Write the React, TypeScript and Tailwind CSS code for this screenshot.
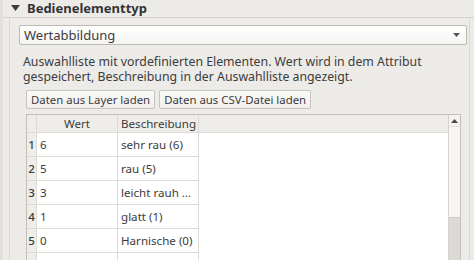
import React from "react";

const rows = [
  ["1", "6", "sehr rau (6)"],
  ["2", "5", "rau (5)"],
  ["3", "3", "leicht rauh …"],
  ["4", "1", "glatt (1)"],
  ["5", "0", "Harnische (0)"],
  ["", "", ""],
];

export default function App() {
  return (
    <div
      className="w-[474px] h-[260px] overflow-hidden bg-[#edebe8] text-[#3c3c3c] flex"
      style={{ fontFamily: '"Noto Sans", "Open Sans", sans-serif' }}
    >
      <div className="w-[3px] h-full bg-[#e2dfdb] shrink-0" />
      <div className="flex-1 flex flex-col">
        {/* header */}
        <div className="h-[18px] flex items-center pl-[8px] border-b border-[#d6d3ce] shrink-0">
          <svg width="9" height="6" viewBox="0 0 9 6" className="mr-[7px] mt-[-2px]">
            <path d="M0 0 H9 L4.5 6 Z" fill="#3c3c3c" />
          </svg>
          <span className="font-bold text-[13px] leading-none text-[#333]">Bedienelementtyp</span>
        </div>
        {/* group */}
        <div className="flex-1 ml-[6px] mr-[4px] border-l border-r border-[#dcd9d4] pl-[9px] pr-[2px] pt-[7px] flex flex-col">
          {/* combo */}
          <div className="h-[20px] rounded-[2px] border border-[#bdb9b3] bg-gradient-to-b from-white to-[#f5f4f2] flex items-center pl-[4px] pr-[6px] shrink-0">
            <span className="text-[13px] leading-none flex-1">Wertabbildung</span>
            <svg width="7" height="4" viewBox="0 0 7 4">
              <path d="M0 0 H7 L3.5 4 Z" fill="#555" />
            </svg>
          </div>
          {/* description */}
          <div className="pl-[4px] pt-[9px] text-[12.3px] leading-[15px] text-[#3c3c3c] whitespace-nowrap">
            Auswahlliste mit vordefinierten Elementen. Wert wird in dem Attribut
            <br />
            gespeichert, Beschreibung in der Auswahlliste angezeigt.
          </div>
          {/* buttons */}
          <div className="flex gap-[4px] pl-[7px] pt-[6px] shrink-0">
            <div className="h-[19px] px-[4px] rounded-[2px] border border-[#c7c3bd] bg-gradient-to-b from-[#fbfbfa] to-[#efeeec] flex items-center text-[11.4px] leading-none whitespace-nowrap">
              Daten aus Layer laden
            </div>
            <div className="h-[19px] px-[4px] rounded-[2px] border border-[#c7c3bd] bg-gradient-to-b from-[#fbfbfa] to-[#efeeec] flex items-center text-[11.4px] leading-none whitespace-nowrap">
              Daten aus CSV-Datei laden
            </div>
          </div>
          {/* table */}
          <div className="mt-[5px] ml-[7px] mr-[6px] flex-1 border-l border-t border-r border-[#c2beb8] bg-white flex min-h-0">
            <div className="flex-1 flex flex-col min-w-0">
              <div className="h-[18px] flex bg-[#efedea] border-b border-[#dedbd7] shrink-0 text-[11.6px] whitespace-nowrap">
                <div className="w-[10px] border-r border-[#dedbd7] shrink-0" />
                <div className="w-[81px] border-r border-[#dedbd7] flex items-center justify-center shrink-0">Wert</div>
                <div className="w-[81px] border-r border-[#dedbd7] flex items-center pl-[3px] shrink-0">Beschreibung</div>
              </div>
              {rows.map((r, i) => (
                <div key={i} className="h-[24px] flex shrink-0 text-[11.6px] whitespace-nowrap">
                  <div className="w-[10px] bg-[#efedea] border-r border-b border-[#dedbd7] flex items-center justify-center shrink-0 font-medium">
                    {r[0]}
                  </div>
                  <div className="w-[81px] border-r border-b border-[#dedbd7] flex items-center pl-[3px] shrink-0">{r[1]}</div>
                  <div className="w-[81px] border-r border-b border-[#dedbd7] flex items-center pl-[3px] shrink-0 overflow-hidden">{r[2]}</div>
                </div>
              ))}
            </div>
            {/* scrollbar */}
            <div className="w-[12px] border-l border-[#d6d3ce] flex flex-col shrink-0">
              <div className="h-[12px] flex items-center justify-center bg-[#f3f2f0] border-b border-[#e2dfdb]">
                <svg width="7" height="4" viewBox="0 0 7 4">
                  <path d="M0 4 H7 L3.5 0 Z" fill="#4a4a4a" />
                </svg>
              </div>
              <div className="h-[90px] bg-[#f7f6f5]" />
              <div className="flex-1 bg-[#dcdad6] border-t border-[#cfccc7]" />
            </div>
          </div>
        </div>
      </div>
    </div>
  );
}
